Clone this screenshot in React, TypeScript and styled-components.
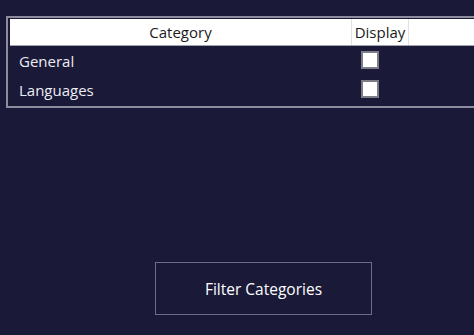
import React, { useState } from 'react';
import styled, { createGlobalStyle } from 'styled-components';

const GlobalStyle = createGlobalStyle`
    html, body {
        margin: 0;
        padding: 0;
        background: #1a1938;
        overflow: hidden;
    }
    * {
        box-sizing: border-box;
    }
`;

// the window is wider than the visible frame, so clip it
const Viewport = styled.div`
    width: 474px;
    height: 335px;
    overflow: hidden;
`;

const Page = styled.div`
    width: 527px;
    height: 335px;
    padding: 16px 6px 0 6px;
    font-family: 'Open Sans', 'Noto Sans', sans-serif;
    color: #ffffff;
    display: flex;
    flex-direction: column;
`;

const GridBox = styled.div`
    border: 2px solid #8d8c9e;
    padding: 1px 2px 2px 2px;
`;

const HeaderRow = styled.div`
    display: flex;
    height: 27px;
    background: #ffffff;
    border-bottom: 1px solid #a3a3ad;
    color: #1b1b1b;
    font-size: 15px;
`;

const HeaderCell = styled.div<{ $width?: number; $divider?: boolean }>`
    display: flex;
    align-items: center;
    justify-content: center;
    width: ${({ $width }) => ($width ? `${$width}px` : 'auto')};
    flex: ${({ $width }) => ($width ? '0 0 auto' : '1')};
    border-right: ${({ $divider }) => ($divider ? '1px solid #e2e2e6' : 'none')};
`;

const Row = styled.div`
    display: flex;
    height: 29px;
    font-size: 15px;
    color: #ececf4;
`;

const Cell = styled.div<{ $width?: number }>`
    display: flex;
    align-items: center;
    padding-left: 9px;
    width: ${({ $width }) => ($width ? `${$width}px` : 'auto')};
    flex: ${({ $width }) => ($width ? '0 0 auto' : '1')};
`;

const Check = styled.button<{ $checked: boolean }>`
    width: 18px;
    height: 18px;
    padding: 0;
    margin: 0 0 2px 0;
    background: #ffffff;
    border: 2px solid #7c7c86;
    cursor: pointer;
    display: flex;
    align-items: center;
    justify-content: center;
    color: #1b1b1b;
    font-size: 12px;
`;

const ButtonRow = styled.div`
    display: flex;
    justify-content: center;
    margin-top: 154px;
`;

const FilterButton = styled.button`
    width: 217px;
    height: 53px;
    background: transparent;
    border: 1px solid #6e6d86;
    color: #ffffff;
    font-family: 'Open Sans', 'Noto Sans', sans-serif;
    font-size: 15.5px;
    cursor: pointer;
`;

const categories = ['General', 'Languages'];

const App: React.FC = () => {
    const [shown, setShown] = useState<Record<string, boolean>>({});

    return (
        <>
            <GlobalStyle />
            <Viewport>
                <Page>
                    <GridBox>
                        <HeaderRow>
                            <HeaderCell $width={342} $divider>Category</HeaderCell>
                            <HeaderCell $width={57} $divider>Display</HeaderCell>
                            <HeaderCell />
                        </HeaderRow>
                        {categories.map((name) => (
                            <Row key={name}>
                                <Cell $width={342}>{name}</Cell>
                                <Cell $width={57}>
                                    <Check
                                        $checked={!!shown[name]}
                                        onClick={() => setShown({ ...shown, [name]: !shown[name] })}
                                    >
                                        {shown[name] ? '✓' : ''}
                                    </Check>
                                </Cell>
                                <Cell />
                            </Row>
                        ))}
                    </GridBox>
                    <ButtonRow>
                        <FilterButton>Filter Categories</FilterButton>
                    </ButtonRow>
                </Page>
            </Viewport>
        </>
    );
};

export default App;
